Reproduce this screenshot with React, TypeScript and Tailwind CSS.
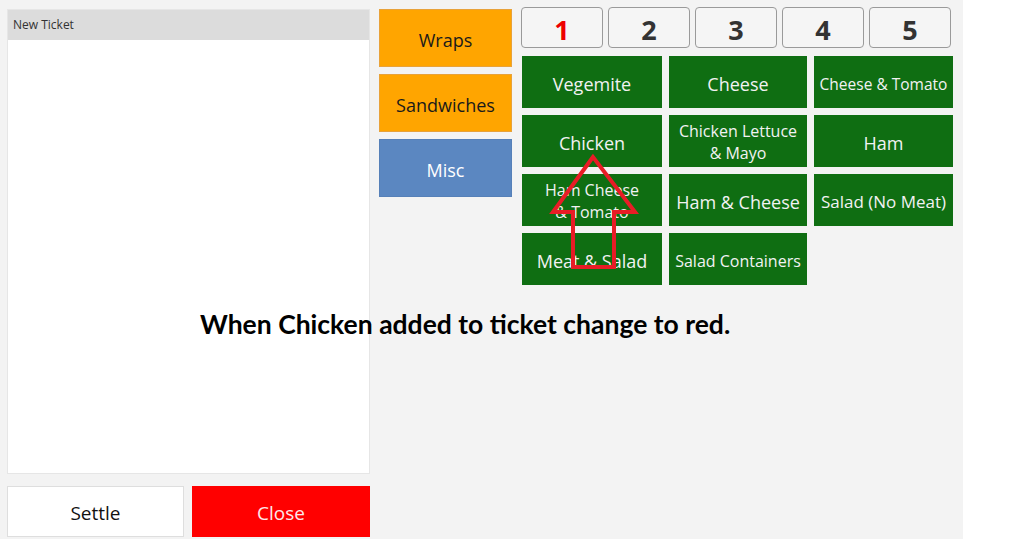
import React from 'react';

const TABS = ['1', '2', '3', '4', '5'];

const ITEMS: { label: string; size: string }[] = [
  { label: 'Vegemite', size: 'text-[18px] pt-[5px]' },
  { label: 'Cheese', size: 'text-[18px] pt-[5px]' },
  { label: 'Cheese & Tomato', size: 'text-[15.5px] pt-[4px]' },
  { label: 'Chicken', size: 'text-[18px] pt-[5px]' },
  { label: 'Chicken Lettuce\n& Mayo', size: 'text-[16px] pt-[3px]' },
  { label: 'Ham', size: 'text-[18px] pt-[5px]' },
  { label: 'Ham Cheese\n& Tomato', size: 'text-[16px] pt-[3px]' },
  { label: 'Ham & Cheese', size: 'text-[18px] pt-[5px]' },
  { label: 'Salad (No Meat)', size: 'text-[17px] pt-[5px]' },
  { label: 'Meat & Salad', size: 'text-[18px] pt-[5px]' },
  { label: 'Salad Containers', size: 'text-[16px] pt-[5px]' },
];

function Arrow() {
  return (
    <svg
      className="absolute left-[548px] top-[152px] pointer-events-none"
      width="92"
      height="120"
      viewBox="0 0 92 120"
    >
      <path
        d="M45 5 L5 60 L25 60 L25 115 L66 115 L66 60 L87 60 Z"
        fill="none"
        stroke="#e81c26"
        strokeWidth="4"
        strokeLinejoin="miter"
      />
    </svg>
  );
}

export default function App() {
  return (
    <div
      className="relative w-[1024px] h-[539px] flex bg-white overflow-hidden"
      style={{ fontFamily: '"Open Sans", "Noto Sans", sans-serif' }}
    >
      <div className="w-[963px] h-full bg-[#f3f3f3] flex">
        {/* ticket column */}
        <div className="ml-[7px] w-[363px] flex flex-col pt-[9px]">
          <div className="h-[465px] bg-white border border-[#e6e6e6] flex flex-col">
            <div className="h-[30px] bg-[#dcdcdc] px-[5px] flex items-center text-[12px] text-[#333]">
              New Ticket
            </div>
          </div>
          <div className="mt-[12px] flex gap-[8px] h-[51px]">
            <button className="w-[177px] pt-[4px] bg-white border border-[#dedede] text-[19px] text-[#111]">
              Settle
            </button>
            <button className="flex-1 pt-[4px] bg-[#ff0000] text-[19px] text-[#fde8e8]">Close</button>
          </div>
        </div>

        {/* categories */}
        <div className="ml-[9px] w-[133px] pt-[9px] flex flex-col gap-[7px]">
          <button className="h-[58px] pt-[4px] bg-[#ffa500] border border-[#e8a23a] text-[18px] text-[#1a1a1a]">
            Wraps
          </button>
          <button className="h-[58px] pt-[4px] bg-[#ffa500] border border-[#e8a23a] text-[18px] text-[#1a1a1a]">
            Sandwiches
          </button>
          <button className="h-[58px] pt-[4px] bg-[#5b87c1] border border-[#5680b8] text-[18px] text-white">
            Misc
          </button>
        </div>

        {/* items */}
        <div className="ml-[9px] w-[433px] flex flex-col">
          <div className="mt-[7px] flex gap-[5px] h-[41px]">
            {TABS.map((t) => (
              <button
                key={t}
                className={`w-[82px] pt-[4px] rounded-[4px] border border-[#9a9a9a] bg-[#f5f5f5] text-[27px] font-bold leading-none ${
                  t === '1' ? 'text-[#ee0000]' : 'text-[#333]'
                }`}
              >
                {t}
              </button>
            ))}
          </div>
          <div className="mt-[8px] ml-[1px] grid grid-cols-[140px_138px_139px] gap-x-[7px] gap-y-[7px] auto-rows-[52px]">
            {ITEMS.map((it) => (
              <button
                key={it.label}
                className={`bg-[#0f6e12] text-[#f2f2f2] leading-[1.35] px-1 whitespace-pre-line ${it.size}`}
              >
                {it.label}
              </button>
            ))}
          </div>
        </div>
      </div>

      <Arrow />

      <div
        className="absolute left-[200px] top-[305px] text-[26.5px] font-bold text-black whitespace-nowrap"
        style={{ fontFamily: 'Lato, "Open Sans", sans-serif' }}
      >
        When Chicken added to ticket change to red.
      </div>
    </div>
  );
}
